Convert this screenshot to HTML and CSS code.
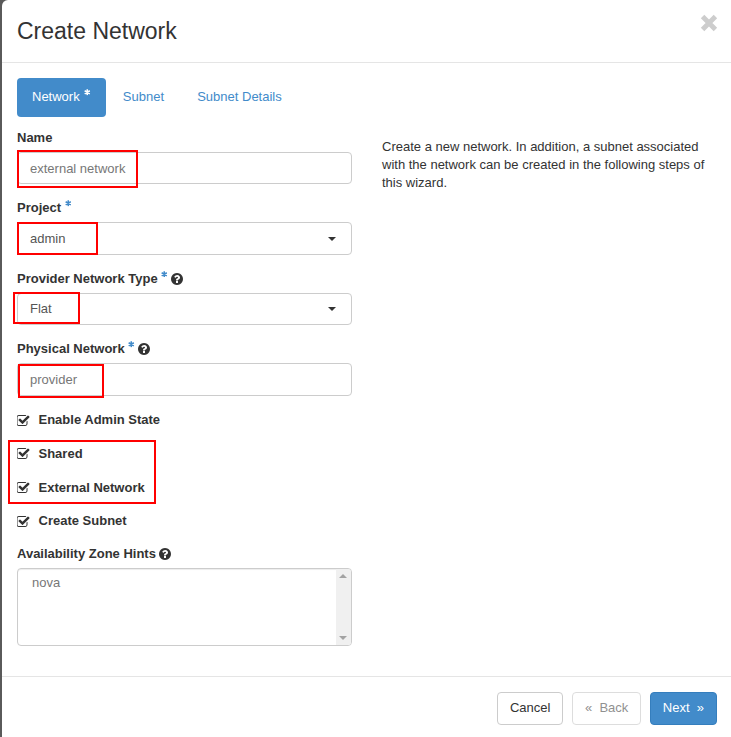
FILE: index.html
```html
<!DOCTYPE html>
<html lang="en">
<head>
<meta charset="utf-8">
<title>Create Network</title>
<link rel="stylesheet" href="styles.css">
</head>
<body>
<svg class="defs" width="0" height="0" aria-hidden="true">
  <symbol id="q" viewBox="128 128 1536 1536"><path d="M1024 1376v-192q0-14-9-23t-23-9h-192q-14 0-23 9t-9 23v192q0 14 9 23t23 9h192q14 0 23-9t9-23zm256-672q0-88-55.500-163t-138.500-116-170-41q-243 0-371 213-15 24 8 42l132 100q7 6 19 6 16 0 25-12 53-68 86-92 34-24 86-24 48 0 85.500 26t37.500 59q0 38-20 61t-68 45q-63 28-115.500 86.500t-52.500 125.500v36q0 14 9 23t23 9h192q14 0 23-9t9-23q0-19 21.500-49.500t54.500-49.500q32-18 49-28.500t46-35 44.500-48 28-60.500 12.500-81zm384 192q0 209-103 385.500t-279.500 279.500-385.500 103-385.500-103-279.500-279.500-103-385.500 103-385.500 279.500-279.500 385.500-103 385.500 103 279.500 279.500 103 385.500z"/></symbol>
  <symbol id="c" viewBox="128 128 1664 1536"><path d="M1472 930v318q0 119-84.500 203.500t-203.500 84.500h-832q-119 0-203.500-84.500t-84.500-203.500v-832q0-119 84.500-203.500t203.500-84.500h832q63 0 117 25 15 7 18 23 3 17-9 29l-49 49q-10 10-23 10-3 0-9-2-23-6-45-6h-832q-66 0-113 47t-47 113v832q0 66 47 113t113 47h832q66 0 113-47t47-113v-254q0-13 9-22l64-64q10-10 23-10 6 0 12 3 20 8 20 29zm231-489l-814 814q-24 24-57 24t-57-24l-430-430q-24-24-24-57t24-57l110-110q24-24 57-24t57 24l263 263 647-647q24-24 57-24t57 24l110 110q24 24 24 57t-24 57z"/></symbol>
  <symbol id="a" viewBox="0 0 12 12"><path d="M6 0.500v11M1.200 3.200l9.600 5.600M10.800 3.200l-9.600 5.600" fill="none" stroke="currentColor" stroke-width="2.800"/></symbol>
</svg>
<div class="modal">
  <header class="modal-header">
    <h1 class="title">Create Network</h1>
    <svg class="close" viewBox="0 0 14 14" aria-label="Close"><path d="M2 2l10 10M12 2L2 12"/></svg>
  </header>
  <div class="modal-body">
    <nav class="tabs">
      <a class="tab active">Network <svg class="req"><use href="#a"/></svg></a>
      <a class="tab">Subnet</a>
      <a class="tab">Subnet Details</a>
    </nav>
    <div class="columns">
      <form class="form">
        <div class="group">
          <label class="label">Name</label>
          <div class="control placeholder">external network</div>
          <span class="mark mark-name"></span>
        </div>
        <div class="group">
          <label class="label">Project <svg class="req"><use href="#a"/></svg></label>
          <div class="control select">admin<span class="caret"></span></div>
          <span class="mark mark-project"></span>
        </div>
        <div class="group">
          <label class="label">Provider Network Type <svg class="req"><use href="#a"/></svg> <svg class="help"><use href="#q"/></svg></label>
          <div class="control select">Flat<span class="caret"></span></div>
          <span class="mark mark-type"></span>
        </div>
        <div class="group tight">
          <label class="label">Physical Network <svg class="req"><use href="#a"/></svg> <svg class="help"><use href="#q"/></svg></label>
          <div class="control placeholder">provider</div>
          <span class="mark mark-physical"></span>
        </div>
        <div class="checks">
          <label class="check"><svg class="box"><use href="#c"/></svg>Enable Admin State</label>
          <label class="check"><svg class="box"><use href="#c"/></svg>Shared</label>
          <label class="check"><svg class="box"><use href="#c"/></svg>External Network</label>
          <label class="check"><svg class="box"><use href="#c"/></svg>Create Subnet</label>
          <span class="mark mark-checks"></span>
        </div>
        <div class="group">
          <label class="label">Availability Zone Hints <svg class="help"><use href="#q"/></svg></label>
          <div class="listbox">
            <div class="option">nova</div>
            <div class="scrollbar"><span class="arrow up"></span><span class="arrow down"></span></div>
          </div>
        </div>
      </form>
      <p class="help-text">Create a new network. In addition, a subnet associated with the network can be created in the following steps of this wizard.</p>
    </div>
  </div>
  <footer class="modal-footer">
    <button class="btn" type="button">Cancel</button>
    <button class="btn disabled" type="button">«&nbsp; Back</button>
    <button class="btn primary" type="button">Next &nbsp;»</button>
  </footer>
</div>
</body>
</html>
```
FILE: styles.css
```css
* { box-sizing: border-box; }
html, body { margin: 0; height: 737px; overflow: hidden; }
body {
  background: #5a5a5a;
  padding-left: 2px;
  font-family: "Liberation Sans", Arial, sans-serif;
  font-size: 13px;
  line-height: 18.5px;
  color: #333;
}
.defs { position: absolute; }
.modal {
  width: 760px;
  height: 760px;
  background: #fff;
  border-radius: 6px 0 0 0;
}
.modal-header {
  height: 63px;
  border-bottom: 1px solid #e5e5e5;
  padding: 16px 15px 0;
  display: flex;
  justify-content: space-between;
}
.title {
  margin: 0;
  font-size: 23px;
  font-weight: 400;
  line-height: 31px;
  color: #333;
}
.close {
  width: 18px;
  height: 18px;
  margin: -2px 29px 0 0;
  stroke: #cdcdcd;
  stroke-width: 3.800;
  fill: none;
}
.modal-body { height: 613px; padding: 15px 15px 0; }
.tabs { display: flex; gap: 2px; height: 39px; }
.tab {
  display: block;
  padding: 10px 15px;
  border-radius: 4px;
  color: #428bca;
}
.tab:last-child { margin-left: 1.200px; }
.tab.active { background: #428bca; color: #fff; }
.tab.active .req { color: #fff; margin-left: 1px; }
.req {
  width: 6.500px;
  height: 6.500px;
  color: #428bca;
  vertical-align: 5.500px;
}
.columns { display: flex; margin-top: 12px; }
.form { width: 335px; flex: none; }
.help-text { width: 330px; margin: 9px 0 0 30px; line-height: 18.200px; }
.group { position: relative; margin-bottom: 15px; }
.group.tight { margin-bottom: 8.200px; }
.label {
  display: block;
  font-weight: 700;
  height: 18.500px;
  margin-bottom: 4.400px;
  white-space: nowrap;
}
.help { width: 12px; height: 12px; margin-left: -0.500px; vertical-align: -2px; fill: #333; }
.control {
  position: relative;
  height: 32.500px;
  padding: 6.700px 12px;
  border: 1px solid #ccc;
  border-radius: 4px;
  background: #fff;
}
.placeholder { color: #777; }
.select { color: #555; }
.caret {
  position: absolute;
  right: 15.500px;
  top: 13.500px;
  border-top: 4px solid #333;
  border-left: 4px solid transparent;
  border-right: 4px solid transparent;
}
.checks { position: relative; display: flex; flex-direction: column; margin-bottom: 6.800px; }
.check {
  display: flex;
  align-items: center;
  height: 33.670px;
  font-weight: 700;
  white-space: nowrap;
}
.box { width: 13px; height: 12px; margin-right: 8.500px; fill: #333; flex: none; }
.listbox {
  display: flex;
  height: 78px;
  border: 1px solid #ccc;
  border-radius: 4px;
  overflow: hidden;
  box-shadow: inset 0 1px 1px rgba(0,0,0,.075);
}
.option { flex: 1; padding: 5px 14px; color: #777; }
.scrollbar {
  position: relative;
  width: 15px;
  background: #f0f0f0;
}
.arrow {
  position: absolute;
  left: 3px;
  border-left: 4px solid transparent;
  border-right: 4px solid transparent;
}
.arrow.up { top: 5px; border-bottom: 4px solid #a3a3a3; }
.arrow.down { bottom: 5px; border-top: 4px solid #a3a3a3; }
.mark { position: absolute; border: 2px solid #f00; pointer-events: none; }
.mark-name { left: 0; top: 21px; width: 121px; height: 38px; }
.mark-project { left: 0; top: 22.600px; width: 81px; height: 33px; }
.mark-type { left: -4px; top: 22.200px; width: 67px; height: 32px; }
.mark-physical { left: 1px; top: 23.500px; width: 86px; height: 34px; }
.mark-checks { left: -9px; top: 36px; width: 148px; height: 64px; }
.modal-footer {
  display: flex;
  width: 729px;
  height: 84px;
  border-top: 1px solid #e5e5e5;
  padding: 15px 14px 0 0;
  justify-content: flex-end;
  gap: 8.500px;
}
.btn {
  height: 33px;
  padding: 6px 12px;
  font: inherit;
  color: #333;
  background: #fff;
  border: 1px solid #ccc;
  border-radius: 4px;
}
.btn.disabled { opacity: .65; color: #555; }
.btn.primary { background: #428bca; border-color: #357ebd; color: #fff; }
```
